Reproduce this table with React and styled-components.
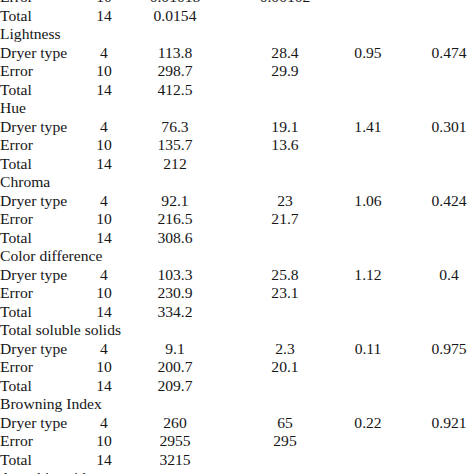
import React from 'react';
import styled, { createGlobalStyle } from 'styled-components';

const GlobalStyle = createGlobalStyle`
    html, body {
        margin: 0;
        padding: 0;
        background: #fff;
        overflow: hidden;
    }
    body {
        width: 474px;
        height: 474px;
    }
`;

const Sheet = styled.div`
    width: 474px;
    margin-top: -12px;
    font-family: "Liberation Serif", "Times New Roman", serif;
    font-size: 15.6px;
    line-height: 18.5px;
    color: #161616;
`;

const Row = styled.div`
    display: grid;
    grid-template-columns: 80px 48px 94px 126px 40px 86px;
    height: 18.5px;
`;

const Label = styled.div`
    white-space: nowrap;
`;

const Cell = styled.div`
    text-align: center;
    white-space: nowrap;
    padding-left: ${p => p.$inset || 0}px;
`;

const groups = [
    { rows: [['Error', '10', '0.01018', '0.00102', '', ''], ['Total', '14', '0.0154', '', '', '']] },
    {
        title: 'Lightness',
        rows: [
            ['Dryer type', '4', '113.8', '28.4', '0.95', '0.474'],
            ['Error', '10', '298.7', '29.9', '', ''],
            ['Total', '14', '412.5', '', '', ''],
        ],
    },
    {
        title: 'Hue',
        rows: [
            ['Dryer type', '4', '76.3', '19.1', '1.41', '0.301'],
            ['Error', '10', '135.7', '13.6', '', ''],
            ['Total', '14', '212', '', '', ''],
        ],
    },
    {
        title: 'Chroma',
        rows: [
            ['Dryer type', '4', '92.1', '23', '1.06', '0.424'],
            ['Error', '10', '216.5', '21.7', '', ''],
            ['Total', '14', '308.6', '', '', ''],
        ],
    },
    {
        title: 'Color difference',
        rows: [
            ['Dryer type', '4', '103.3', '25.8', '1.12', '0.4'],
            ['Error', '10', '230.9', '23.1', '', ''],
            ['Total', '14', '334.2', '', '', ''],
        ],
    },
    {
        title: 'Total soluble solids',
        rows: [
            ['Dryer type', '4', '9.1', '2.3', '0.11', '0.975'],
            ['Error', '10', '200.7', '20.1', '', ''],
            ['Total', '14', '209.7', '', '', ''],
        ],
    },
    {
        title: 'Browning Index',
        rows: [
            ['Dryer type', '4', '260', '65', '0.22', '0.921'],
            ['Error', '10', '2955', '295', '', ''],
            ['Total', '14', '3215', '', '', ''],
        ],
    },
    { title: 'Ascorbic acid', rows: [] },
];

function App() {
    return (
        <>
            <GlobalStyle />
            <Sheet>
                {groups.map((group, gi) => (
                    <React.Fragment key={gi}>
                        {group.title && (
                            <Row>
                                <Label>{group.title}</Label>
                            </Row>
                        )}
                        {group.rows.map(([name, ...values], ri) => (
                            <Row key={ri}>
                                <Label>{name}</Label>
                                {values.map((v, vi) => (
                                    <Cell key={vi} $inset={vi === 4 ? 36 : 0}>{v}</Cell>
                                ))}
                            </Row>
                        ))}
                    </React.Fragment>
                ))}
            </Sheet>
        </>
    );
}

export default App;
